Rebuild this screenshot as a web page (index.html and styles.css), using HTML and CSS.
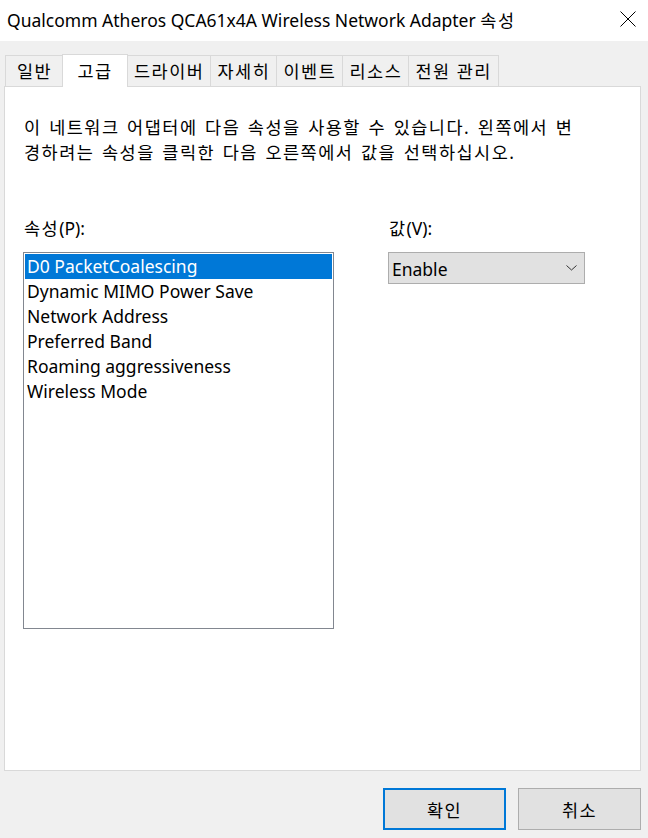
FILE: index.html
```html
<!DOCTYPE html>
<html lang="ko">
<head>
  <meta charset="UTF-8">
  <meta name="viewport" content="width=device-width, initial-scale=1.0">
  <title>Qualcomm Atheros QCA61x4A Wireless Network Adapter 속성</title>
  <link rel="stylesheet" href="styles.css">
</head>
<body>

  <!-- Title Bar -->
  <div class="title-bar">
    <span class="title">Qualcomm Atheros QCA61x4A Wireless Network Adapter <span class="ko">속성</span></span>
    <svg class="close-icon" width="16" height="16" viewBox="0 0 16 16">
      <path d="M0.5 0.5 L15.5 15.5 M15.5 0.5 L0.5 15.5" stroke="#000" stroke-width="1" fill="none"/>
    </svg>
  </div>

  <!-- Tabs -->
  <div class="tabs">
    <div class="tab narrow">일반</div>
    <div class="tab active">고급</div>
    <div class="tab">드라이버</div>
    <div class="tab">자세히</div>
    <div class="tab">이벤트</div>
    <div class="tab">리소스</div>
    <div class="tab">전원 관리</div>
  </div>

  <!-- Tab Panel -->
  <div class="panel">
    <p class="description">이 네트워크 어댑터에 다음 속성을 사용할 수 있습니다. 왼쪽에서 변<br>경하려는 속성을 클릭한 다음 오른쪽에서 값을 선택하십시오.</p>

    <div class="fields">
      <div class="field-left">
        <div class="label"><span class="ko">속성</span>(P):</div>
        <div class="listbox">
          <div class="item selected">D0 PacketCoalescing</div>
          <div class="item">Dynamic MIMO Power Save</div>
          <div class="item">Network Address</div>
          <div class="item">Preferred Band</div>
          <div class="item">Roaming aggressiveness</div>
          <div class="item">Wireless Mode</div>
        </div>
      </div>

      <div class="field-right">
        <div class="label"><span class="ko">값</span>(V):</div>
        <div class="select">
          <span>Enable</span>
          <svg class="chevron" width="11" height="6" viewBox="0 0 11 6">
            <path d="M0.5 0.5 L5.5 5 L10.5 0.5" stroke="#333" stroke-width="1" fill="none"/>
          </svg>
        </div>
      </div>
    </div>
  </div>

  <!-- Dialog Buttons -->
  <div class="buttons">
    <button class="btn default">확인</button>
    <button class="btn">취소</button>
  </div>

</body>
</html>
```

FILE: styles.css
```css
/* Global Styles */
body {
  font-family: 'Noto Sans', 'Noto Sans CJK KR', sans-serif;
  font-size: 17.5px;
  background-color: #f0f0f0;
  color: #000;
  margin: 0;
  padding: 0;
  width: 648px;
  height: 838px;
  overflow: hidden;
}

.ko {
  letter-spacing: 1.5px;
}

/* Title Bar */
.title-bar {
  height: 41px;
  background-color: #ffffff;
  display: flex;
  align-items: center;
  justify-content: space-between;
  padding: 0 12px 0 7px;
}

.title {
  line-height: 20px;
  margin-top: -2px;
  white-space: nowrap;
}

.close-icon {
  display: block;
  margin-top: -3px;
}

/* Tabs */
.tabs {
  display: flex;
  align-items: flex-end;
  margin-top: 13px;
  padding-left: 5px;
  height: 32px;
}

.tab {
  height: 30px;
  line-height: 30px;
  min-width: 53px;
  padding: 0 6px;
  text-align: center;
  background-color: #f0f0f0;
  border: 1px solid #d9d9d9;
  border-bottom: none;
  margin-right: -1px;
  letter-spacing: 1.5px;
  word-spacing: 0;
  white-space: nowrap;
}

.tab.narrow {
  min-width: 45px;
}

.tab.active {
  height: 32px;
  line-height: 32px;
  min-width: 50px;
  background-color: #ffffff;
  padding: 0 7px;
  margin: 0 -1px -1px -1px;
  position: relative;
  z-index: 1;
}

/* Panel */
.panel {
  margin: 0 7px 0 4px;
  height: 683px;
  background-color: #ffffff;
  border: 1px solid #d9d9d9;
  padding: 0 18px;
}

.description {
  margin: 28px 0 0 1px;
  line-height: 25px;
  letter-spacing: 1.5px;
  word-spacing: 1.5px;
  white-space: nowrap;
}

.fields {
  display: flex;
  gap: 54px;
  margin-top: 51px;
}

.label {
  line-height: 25px;
  margin-left: 1px;
  margin-bottom: 11px;
}

/* List Box */
.listbox {
  width: 307px;
  height: 373px;
  border: 1px solid #828790;
  padding: 1px;
}

.item {
  height: 25px;
  line-height: 25px;
  padding-left: 2px;
  white-space: nowrap;
}

.item.selected {
  background-color: #0078d7;
  color: #ffffff;
}

/* Combo Box */
.select {
  width: 185px;
  height: 30px;
  background-color: #e1e1e1;
  border: 1px solid #adadad;
  display: flex;
  align-items: center;
  justify-content: space-between;
  padding: 0 7px 0 3px;
}

.select span {
  line-height: 30px;
  margin-top: 2px;
}

.chevron {
  display: block;
}

/* Buttons */
.buttons {
  display: flex;
  justify-content: flex-end;
  gap: 12px;
  margin-top: 17px;
  padding-right: 7px;
}

.btn {
  width: 123px;
  height: 42px;
  background-color: #e1e1e1;
  border: 1px solid #adadad;
  font-family: 'Noto Sans CJK KR', sans-serif;
  font-size: 17.5px;
  letter-spacing: 1.5px;
  color: #000;
  padding: 0;
}

.btn.default {
  border: 2px solid #0078d7;
}
```
